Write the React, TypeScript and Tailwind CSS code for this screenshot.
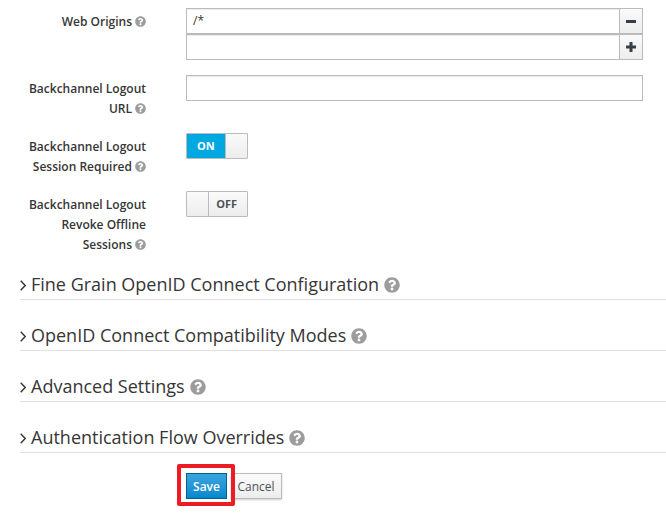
import { FaQuestionCircle } from "react-icons/fa"

function Label({ lines }: { lines: string[] }) {
  return (
    <div className="w-[146px] shrink-0 text-right text-[12px] leading-[20px] font-semibold text-[#363636]">
      {lines.map((line, i) => (
        <div key={line}>
          {line}
          {i === lines.length - 1 && (
            <FaQuestionCircle className="ml-[3px] inline-block relative top-[-1px] text-[#9c9c9c]" size={11} />
          )}
        </div>
      ))}
    </div>
  )
}

function Input({ value }: { value?: string }) {
  return (
    <div className="h-[26px] flex-1 border border-[#bbbbbb] bg-white px-[6px] text-[12px] leading-[24px] text-[#363636] shadow-[inset_0_1px_1px_rgba(3,3,3,0.08)]">
      {value}
    </div>
  )
}

function AddonButton({ children }: { children: React.ReactNode }) {
  return (
    <div className="flex h-[26px] w-[23px] items-center justify-center border border-l-0 border-[#bbbbbb] bg-gradient-to-b from-[#fafafa] to-[#ededed]">
      {children}
    </div>
  )
}

function Toggle({ on }: { on: boolean }) {
  const knob = <div className="h-full w-[22px] bg-gradient-to-b from-[#fafafa] to-[#ededed]" />
  return (
    <div className="flex h-[26px] w-[62px] overflow-hidden rounded-[1px] border border-[#bbbbbb] text-[11px] font-bold">
      {on ? (
        <>
          <div className="flex w-[39px] items-center justify-center bg-[#00a8e1] text-white">ON</div>
          <div className="w-px bg-[#bbbbbb]" />
          {knob}
        </>
      ) : (
        <>
          {knob}
          <div className="w-px bg-[#bbbbbb]" />
          <div className="flex w-[39px] items-center justify-center pr-[3px] bg-gradient-to-b from-[#fafafa] to-[#ededed] text-[#4d5258]">OFF</div>
        </>
      )}
    </div>
  )
}

function Section({ title }: { title: string }) {
  return (
    <div className="h-[51px] border-b border-[#e1e1e1] pt-[23px]">
      <div className="flex items-center text-[18px] leading-[24px] text-[#363636]">
        <svg width="6" height="11" viewBox="0 0 6 11" fill="none" stroke="#363636" strokeWidth="1.4" className="mr-[5px] mt-[2px]">
          <path d="M0.7 0.8l4.5 4.7-4.5 4.7" />
        </svg>
        <span>{title}</span>
        <FaQuestionCircle className="ml-[5px] mt-[1px] text-[#9c9c9c]" size={16} />
      </div>
    </div>
  )
}

export default function App() {
  return (
    <div className="h-[514px] w-[666px] overflow-hidden bg-white font-['Open_Sans',sans-serif]">
      <div className="flex items-start pt-[8px] pr-[23px]">
        <div className="pt-[4px]">
          <Label lines={["Web Origins"]} />
        </div>
        <div className="ml-[40px] flex flex-1 flex-col">
          <div className="flex">
            <Input value="/*" />
            <AddonButton>
              <div className="h-[3px] w-[10px] bg-[#363f48]" />
            </AddonButton>
          </div>
          <div className="flex">
            <Input />
            <AddonButton>
              <svg width="10" height="10" viewBox="0 0 10 10" fill="#363f48">
                <path d="M3.5 0h3v3.5H10v3H6.5V10h-3V6.5H0v-3h3.5z" />
              </svg>
            </AddonButton>
          </div>
        </div>
      </div>

      <div className="mt-[15px] flex items-start pr-[23px]">
        <div className="pt-[4px]">
          <Label lines={["Backchannel Logout", "URL"]} />
        </div>
        <div className="ml-[40px] flex flex-1">
          <Input />
        </div>
      </div>

      <div className="mt-[14px] flex h-[58px] items-start">
        <div className="pt-[4px]">
          <Label lines={["Backchannel Logout", "Session Required"]} />
        </div>
        <div className="ml-[40px]">
          <Toggle on />
        </div>
      </div>

      <div className="flex h-[58px] items-start">
        <div className="pt-[4px]">
          <Label lines={["Backchannel Logout", "Revoke Offline", "Sessions"]} />
        </div>
        <div className="ml-[40px]">
          <Toggle on={false} />
        </div>
      </div>

      <div className="ml-[20px]">
        <Section title="Fine Grain OpenID Connect Configuration" />
        <Section title="OpenID Connect Compatibility Modes" />
        <Section title="Advanced Settings" />
        <Section title="Authentication Flow Overrides" />
      </div>

      <div className="relative mt-[20px] ml-[186px] flex gap-[4px] text-[12px]">
        <div className="flex h-[26px] w-[41px] items-center justify-center border border-[#00618a] bg-gradient-to-b from-[#39a5dc] to-[#0088ce] pt-[2px] font-semibold text-white">
          Save
        </div>
        <div className="flex h-[26px] w-[51px] items-center justify-center border border-[#bbbbbb] bg-gradient-to-b from-[#fafafa] to-[#ededed] pt-[2px] pr-[1px] text-[#4d5258] shadow-[0_1px_2px_rgba(3,3,3,0.2)]">
          Cancel
        </div>
        <div className="absolute left-[-9px] top-[-9px] h-[42px] w-[58px] rounded-[2px] border-[4px] border-[#ed1c24]" />
      </div>
    </div>
  )
}
